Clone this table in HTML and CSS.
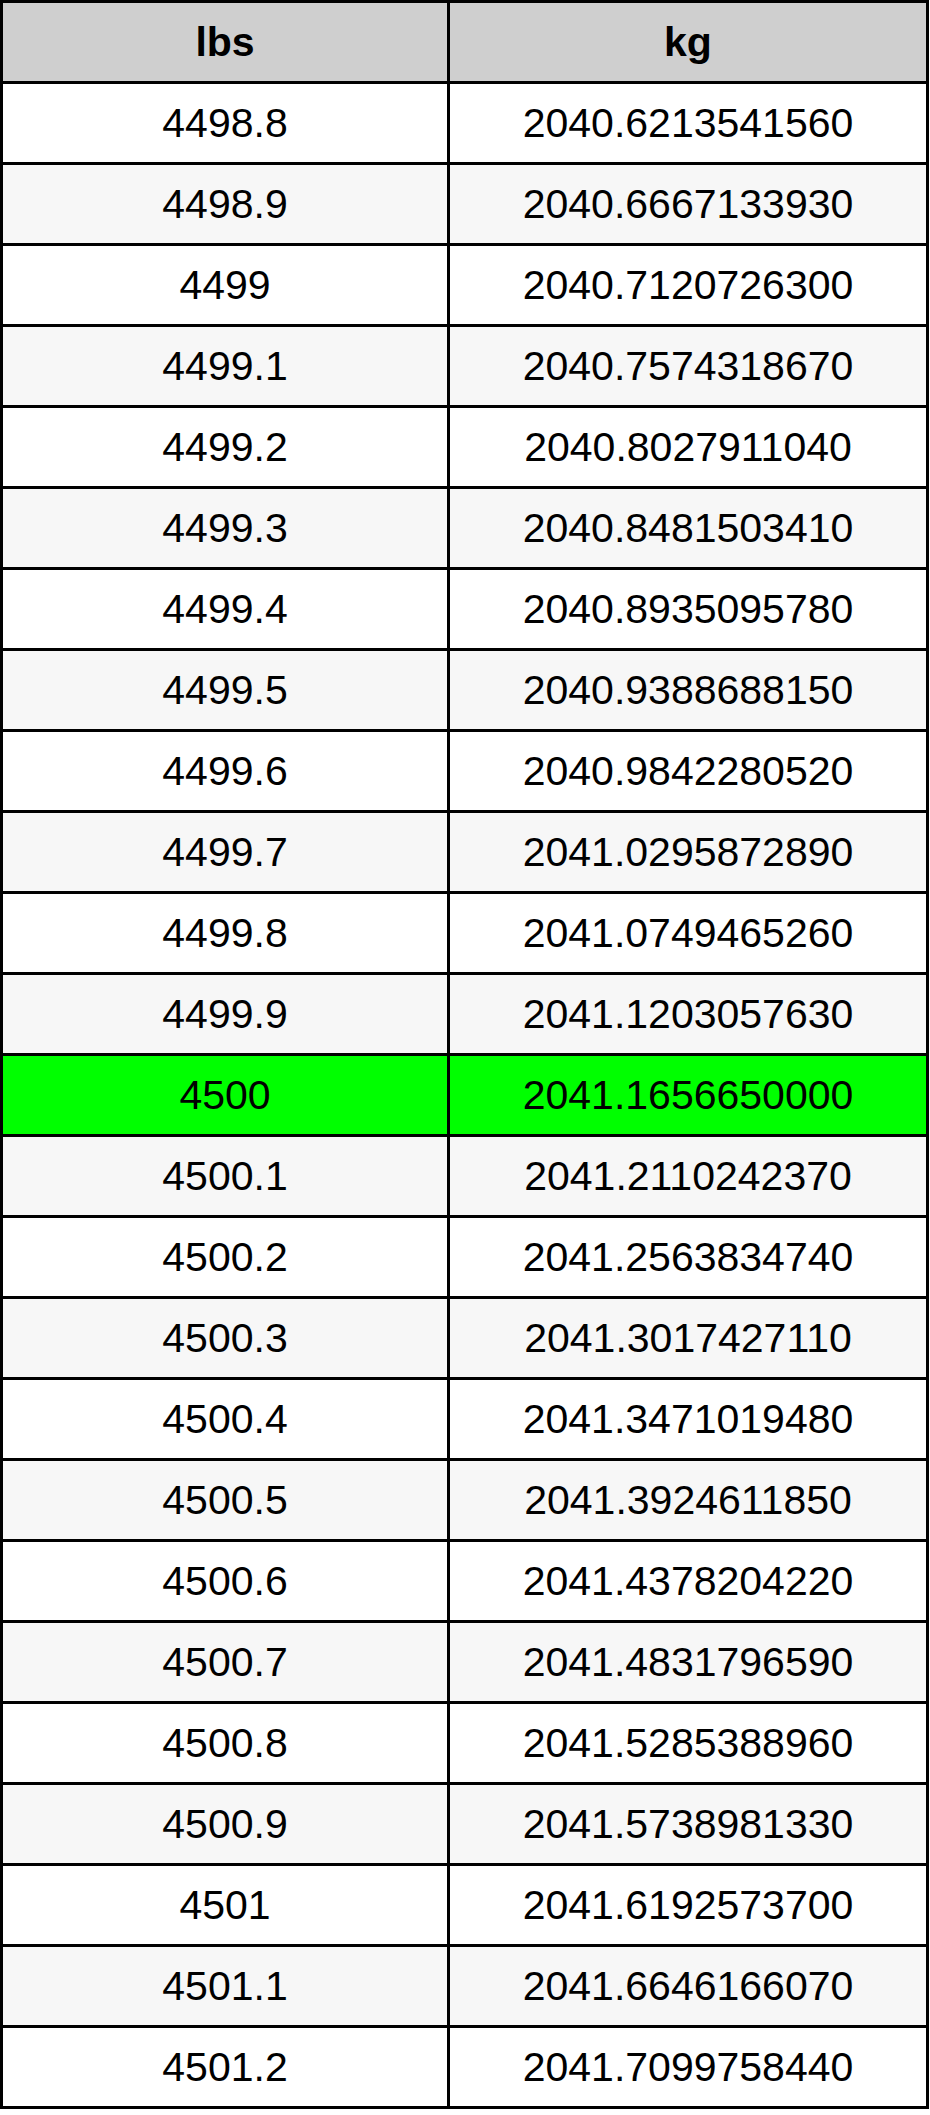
FILE: index.html
```html
<!DOCTYPE html>
<html>
<head>
<meta charset="utf-8">
<link rel="stylesheet" href="styles.css">
</head>
<body>
<table class="conv">
<thead>
<tr><th class="col-a">lbs</th><th class="col-b">kg</th></tr>
</thead>
<tbody>
<tr><td>4498.8</td><td>2040.6213541560</td></tr>
<tr><td>4498.9</td><td>2040.6667133930</td></tr>
<tr><td>4499</td><td>2040.7120726300</td></tr>
<tr><td>4499.1</td><td>2040.7574318670</td></tr>
<tr><td>4499.2</td><td>2040.8027911040</td></tr>
<tr><td>4499.3</td><td>2040.8481503410</td></tr>
<tr><td>4499.4</td><td>2040.8935095780</td></tr>
<tr><td>4499.5</td><td>2040.9388688150</td></tr>
<tr><td>4499.6</td><td>2040.9842280520</td></tr>
<tr><td>4499.7</td><td>2041.0295872890</td></tr>
<tr><td>4499.8</td><td>2041.0749465260</td></tr>
<tr><td>4499.9</td><td>2041.1203057630</td></tr>
<tr class="hl"><td>4500</td><td>2041.1656650000</td></tr>
<tr><td>4500.1</td><td>2041.2110242370</td></tr>
<tr><td>4500.2</td><td>2041.2563834740</td></tr>
<tr><td>4500.3</td><td>2041.3017427110</td></tr>
<tr><td>4500.4</td><td>2041.3471019480</td></tr>
<tr><td>4500.5</td><td>2041.3924611850</td></tr>
<tr><td>4500.6</td><td>2041.4378204220</td></tr>
<tr><td>4500.7</td><td>2041.4831796590</td></tr>
<tr><td>4500.8</td><td>2041.5285388960</td></tr>
<tr><td>4500.9</td><td>2041.5738981330</td></tr>
<tr><td>4501</td><td>2041.6192573700</td></tr>
<tr><td>4501.1</td><td>2041.6646166070</td></tr>
<tr><td>4501.2</td><td>2041.7099758440</td></tr>
</tbody>
</table>
</body>
</html>
```
FILE: styles.css
```css
html, body {
  margin: 0;
  padding: 0;
  background: #ffffff;
}
.conv {
  border-collapse: separate;
  border-spacing: 3px;
  background: #000000;
  width: 929px;
  table-layout: fixed;
  font-family: "Liberation Sans", Arial, sans-serif;
  font-size: 41px;
  color: #000000;
}
.conv th, .conv td {
  padding: 0;
  height: 78px;
  text-align: center;
  vertical-align: middle;
  line-height: 1;
}
.conv th {
  background: #cfcfcf;
  font-weight: bold;
}
.col-a { width: 444px; }
.col-b { width: 476px; }
.conv tbody tr:nth-child(odd) td { background: #ffffff; }
.conv tbody tr:nth-child(even) td { background: #f7f7f7; }
.conv tbody tr.hl td { background: #00ff00; }
```
